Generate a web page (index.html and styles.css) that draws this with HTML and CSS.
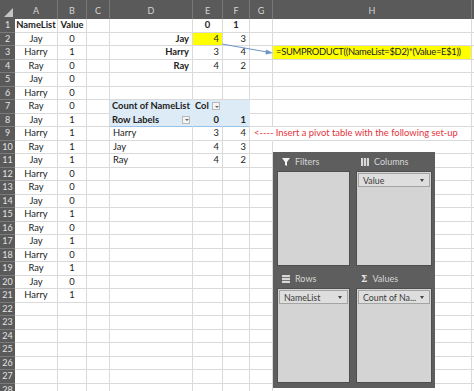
FILE: index.html
```html
<!DOCTYPE html>
<html lang="en">
<head>
<meta charset="UTF-8">
<meta name="viewport" content="width=device-width, initial-scale=1.0">
<title>SUMPRODUCT vs Pivot</title>
<link rel="stylesheet" href="styles.css">
</head>
<body>
<div class="sheet">
    <div class="row head">
        <div class="corner"></div>
        <div>A</div><div>B</div><div>C</div><div>D</div><div>E</div><div>F</div><div>G</div><div>H</div><div></div>
    </div>
    <div class="row"><div>1</div><div class="c b">NameList</div><div class="c b">Value</div><div></div><div></div><div class="c b">0</div><div class="c b">1</div><div></div><div></div><div></div></div>
    <div class="row"><div>2</div><div class="c">Jay</div><div class="c">0</div><div></div><div class="r b">Jay</div><div class="r hl">4</div><div class="r">3</div><div></div><div></div><div></div></div>
    <div class="row"><div>3</div><div class="c">Harry</div><div class="c">1</div><div></div><div class="r b">Harry</div><div class="r">3</div><div class="r">4</div><div></div><div class="hl formula">=SUMPRODUCT((NameList=$D2)*(Value=E$1))</div><div></div></div>
    <div class="row"><div>4</div><div class="c">Ray</div><div class="c">0</div><div></div><div class="r b">Ray</div><div class="r">4</div><div class="r">2</div><div></div><div></div><div></div></div>
    <div class="row"><div>5</div><div class="c">Jay</div><div class="c">0</div><div></div><div></div><div></div><div></div><div></div><div></div><div></div></div>
    <div class="row"><div>6</div><div class="c">Harry</div><div class="c">0</div><div></div><div></div><div></div><div></div><div></div><div></div><div></div></div>
    <div class="row"><div>7</div><div class="c">Ray</div><div class="c">0</div><div></div><div class="pv b">Count of NameList</div><div class="pv b drop">Col<span class="dd"></span></div><div class="pv"></div><div></div><div></div><div></div></div>
    <div class="row"><div>8</div><div class="c">Jay</div><div class="c">1</div><div></div><div class="pv pv-last b drop">Row Labels<span class="dd"></span></div><div class="pv pv-last r b">0</div><div class="pv pv-last r b">1</div><div></div><div></div><div></div></div>
    <div class="row"><div>9</div><div class="c">Harry</div><div class="c">1</div><div></div><div>Harry</div><div class="r">3</div><div class="r">4</div><div class="note">&lt;---- Insert a pivot table with the following set-up</div><div></div><div></div></div>
    <div class="row"><div>10</div><div class="c">Ray</div><div class="c">1</div><div></div><div>Jay</div><div class="r">4</div><div class="r">3</div><div></div><div></div><div></div></div>
    <div class="row"><div>11</div><div class="c">Jay</div><div class="c">1</div><div></div><div>Ray</div><div class="r">4</div><div class="r">2</div><div></div><div></div><div></div></div>
    <div class="row"><div>12</div><div class="c">Harry</div><div class="c">0</div><div></div><div></div><div></div><div></div><div></div><div></div><div></div></div>
    <div class="row"><div>13</div><div class="c">Ray</div><div class="c">0</div><div></div><div></div><div></div><div></div><div></div><div></div><div></div></div>
    <div class="row"><div>14</div><div class="c">Jay</div><div class="c">0</div><div></div><div></div><div></div><div></div><div></div><div></div><div></div></div>
    <div class="row"><div>15</div><div class="c">Harry</div><div class="c">1</div><div></div><div></div><div></div><div></div><div></div><div></div><div></div></div>
    <div class="row"><div>16</div><div class="c">Ray</div><div class="c">0</div><div></div><div></div><div></div><div></div><div></div><div></div><div></div></div>
    <div class="row"><div>17</div><div class="c">Jay</div><div class="c">1</div><div></div><div></div><div></div><div></div><div></div><div></div><div></div></div>
    <div class="row"><div>18</div><div class="c">Harry</div><div class="c">0</div><div></div><div></div><div></div><div></div><div></div><div></div><div></div></div>
    <div class="row"><div>19</div><div class="c">Ray</div><div class="c">1</div><div></div><div></div><div></div><div></div><div></div><div></div><div></div></div>
    <div class="row"><div>20</div><div class="c">Jay</div><div class="c">0</div><div></div><div></div><div></div><div></div><div></div><div></div><div></div></div>
    <div class="row"><div>21</div><div class="c">Harry</div><div class="c">1</div><div></div><div></div><div></div><div></div><div></div><div></div><div></div></div>
    <div class="row"><div>22</div><div></div><div></div><div></div><div></div><div></div><div></div><div></div><div></div><div></div></div>
    <div class="row"><div>23</div><div></div><div></div><div></div><div></div><div></div><div></div><div></div><div></div><div></div></div>
    <div class="row"><div>24</div><div></div><div></div><div></div><div></div><div></div><div></div><div></div><div></div><div></div></div>
    <div class="row"><div>25</div><div></div><div></div><div></div><div></div><div></div><div></div><div></div><div></div><div></div></div>
    <div class="row"><div>26</div><div></div><div></div><div></div><div></div><div></div><div></div><div></div><div></div><div></div></div>
    <div class="row"><div>27</div><div></div><div></div><div></div><div></div><div></div><div></div><div></div><div></div><div></div></div>
    <div class="row"><div>28</div><div></div><div></div><div></div><div></div><div></div><div></div><div></div><div></div><div></div></div>

    <!-- arrow from E2 to the formula in H3 -->
    <svg class="arrow" width="474" height="391" viewBox="0 0 474 391">
        <line x1="222" y1="44" x2="267" y2="52" stroke="#6d94cb" stroke-width="1"/>
        <polygon points="273,53 266,49.5 265.5,54.5" fill="#6d94cb"/>
    </svg>

    <!-- pivot table fields layout -->
    <div class="fields">
        <div class="area-title">
            <svg width="8" height="8" viewBox="0 0 8 8"><path d="M0 0H8L5 4V8L3 7V4Z" fill="#f2f2f2"/></svg>
            Filters
        </div>
        <div class="area-title">
            <svg width="8" height="8" viewBox="0 0 8 8"><rect x="0" y="0" width="8" height="8" fill="#d8d8d8"/><path d="M2.5 0V8M5.5 0V8" stroke="#5e5e5e" stroke-width="0.8"/></svg>
            Columns
        </div>
        <div class="well"></div>
        <div class="well">
            <div class="item">Value<span class="tri"></span></div>
        </div>
        <div class="area-title low">
            <svg width="8" height="8" viewBox="0 0 8 8"><rect x="0" y="0" width="8" height="8" fill="#d8d8d8"/><path d="M0 2.5H8M0 5.5H8" stroke="#5e5e5e" stroke-width="0.8"/></svg>
            Rows
        </div>
        <div class="area-title low">
            <span class="sigma">&Sigma;</span>
            Values
        </div>
        <div class="well">
            <div class="item">NameList<span class="tri"></span></div>
        </div>
        <div class="well">
            <div class="item">Count of Na...<span class="tri"></span></div>
        </div>
    </div>
</div>
</body>
</html>
```
FILE: styles.css
```css
body {
    margin: 0;
    font-family: Lato, "Liberation Sans", sans-serif;
    font-size: 9.4px;
    color: #222;
    background: #fff;
}
.sheet {
    position: relative;
    width: 474px;
    height: 391px;
    overflow: hidden;
}
.row {
    display: grid;
    grid-template-columns: 15px 43px 29px 23px 83px 30px 27px 23px 199px 2px;
    height: 13.5px;
}
.row > div {
    box-sizing: border-box;
    border-right: 1px solid #dadada;
    border-bottom: 1px solid #dadada;
    line-height: 12.5px;
    padding: 0 3px;
    white-space: nowrap;
    overflow: hidden;
}
.row > div:first-child {
    background: #5a5a5a;
    color: #e2e2e2;
    text-align: center;
    padding: 0;
    font-size: 9px;
    border-right: none;
    border-bottom-color: #7a7a7a;
}
.row.head {
    height: 19px;
    background: #5a5a5a;
}
.row.head > div {
    color: #d4d4d4;
    text-align: center;
    line-height: 22px;
    font-size: 9px;
    border-right-color: #777;
    border-bottom: none;
}
.row.head > .corner {
    position: relative;
}
.corner::after {
    content: "";
    position: absolute;
    right: 2px;
    bottom: 2px;
    border-style: solid;
    border-width: 0 0 9px 9px;
    border-color: transparent transparent #c4c4c4 transparent;
}
.row > .c {
    text-align: center;
    padding: 0;
}
.r { text-align: right; }
.b { font-weight: bold; }
.hl { background: #ffff00; }
.row > .formula {
    padding-left: 3px;
    letter-spacing: -0.3px;
}
.row > .pv {
    background: #ddebf7;
    border-right-color: #ddebf7;
    border-bottom-color: #ddebf7;
    padding-left: 2px;
}
.row > .pv.pv-last {
    border-bottom-color: #9bc2e6;
}
.row > .pv.r {
    padding-right: 3px;
}
.drop {
    position: relative;
}
.dd {
    position: absolute;
    right: 2px;
    top: 2px;
    width: 8px;
    height: 8px;
    box-sizing: border-box;
    background: #f4f4f4;
    border: 1px solid #b9b9b9;
}
.dd::after {
    content: "";
    position: absolute;
    left: 1.5px;
    top: 2.5px;
    border-style: solid;
    border-width: 2px 2px 0 2px;
    border-color: #666 transparent transparent transparent;
}
.row > .note {
    overflow: visible;
    color: #e3343b;
    padding-left: 4px;
    border-right-color: transparent;
    position: relative;
    z-index: 1;
}
.arrow {
    position: absolute;
    left: 0;
    top: 0;
    pointer-events: none;
}
.fields {
    position: absolute;
    left: 273px;
    top: 152px;
    width: 162px;
    height: 236px;
    box-sizing: border-box;
    background: #5e5e5e;
    padding: 0 3px 5px 4px;
    display: grid;
    grid-template-columns: 73px 76px;
    grid-template-rows: 19px 95px 22px 95px;
    column-gap: 6px;
}
.area-title {
    display: flex;
    align-items: center;
    gap: 5px;
    padding-left: 5px;
    color: #d6d6d6;
    font-size: 9px;
}
.area-title.low {
    padding-top: 3px;
}
.sigma {
    font-family: "DejaVu Serif", serif;
    font-size: 9px;
    font-weight: bold;
    color: #e8e8e8;
}
.well {
    background: #d4d4d4;
    border: 1px solid #4e4e4e;
}
.item {
    display: flex;
    justify-content: space-between;
    align-items: center;
    height: 12px;
    margin: 1px;
    padding: 0 5px 0 4px;
    background: #dedede;
    border: 1px solid #a4a4a4;
    color: #3a3a3a;
    font-size: 8.8px;
    white-space: nowrap;
}
.tri {
    border-style: solid;
    border-width: 3px 2.5px 0 2.5px;
    border-color: #444 transparent transparent transparent;
}
```
